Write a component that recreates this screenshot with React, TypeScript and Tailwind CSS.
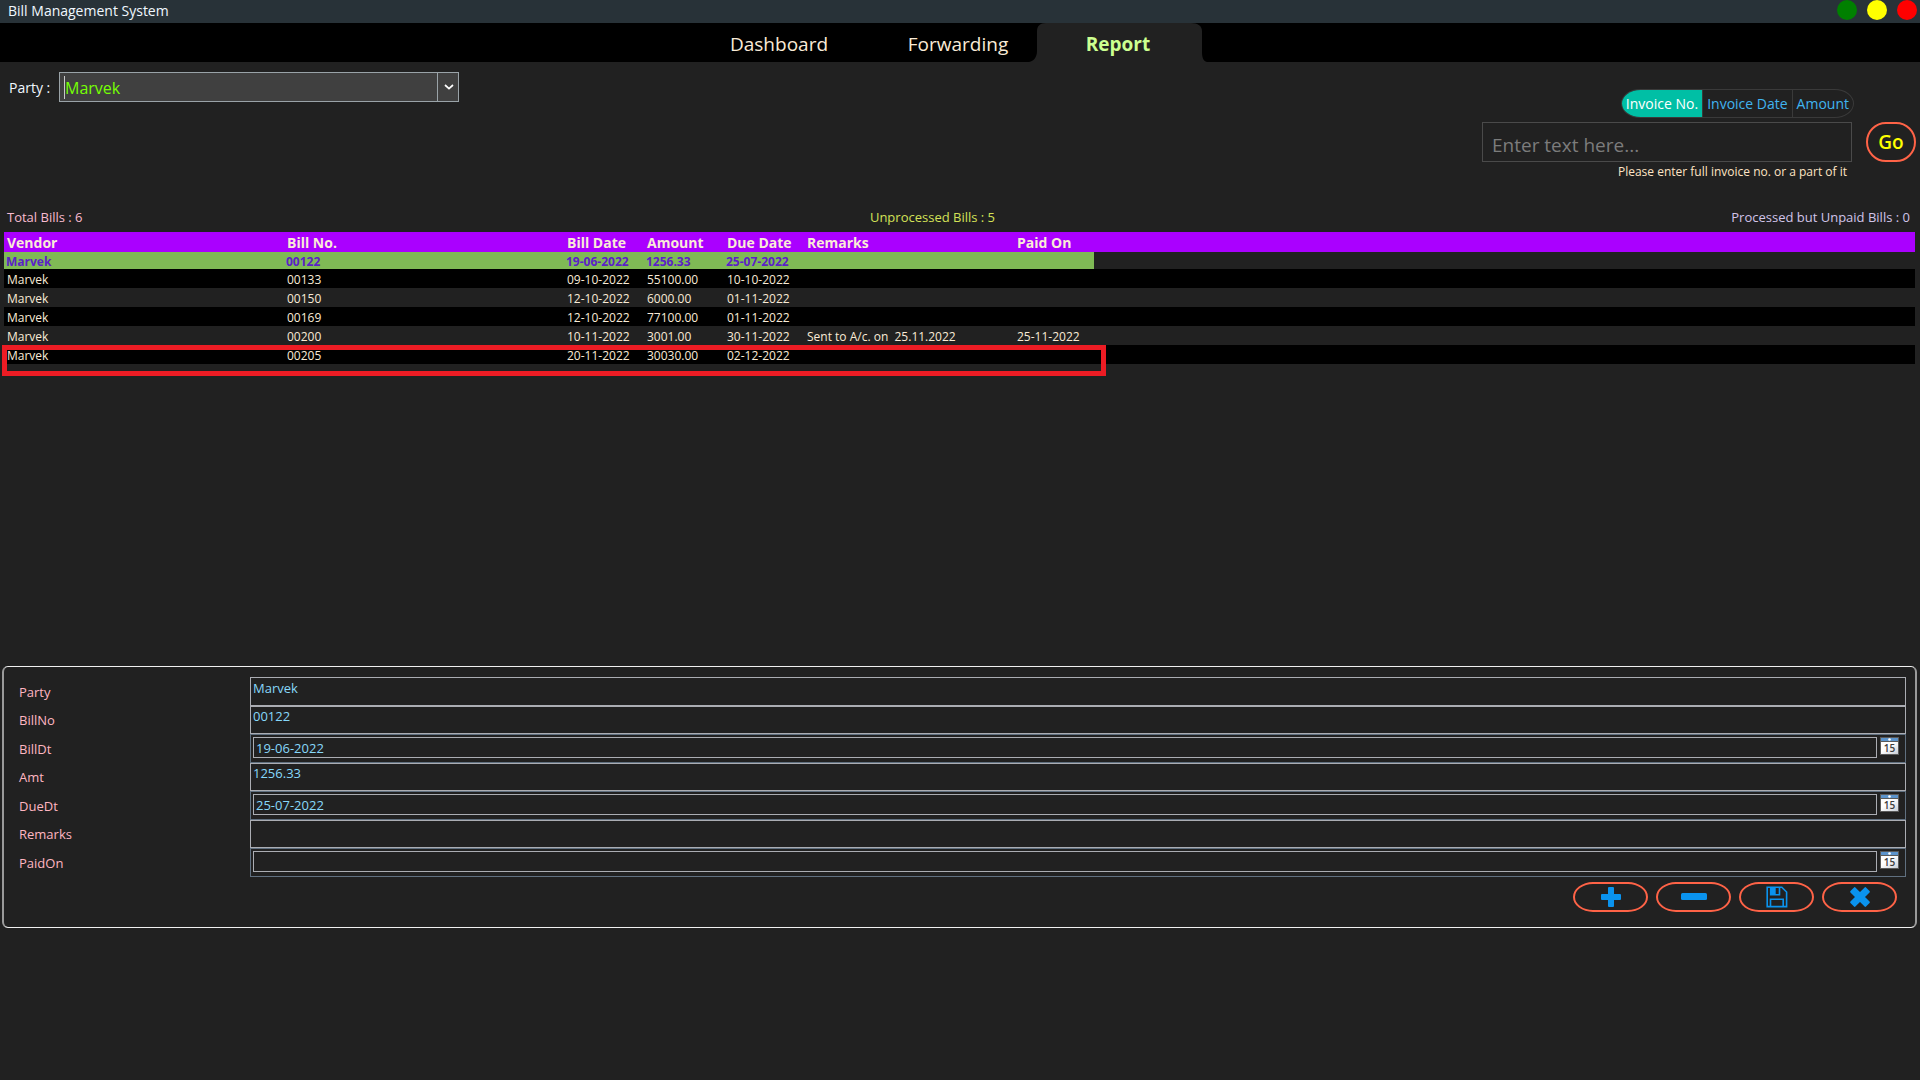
import React, { useState } from 'react';
import clsx from 'clsx';

interface Bill {
  vendor: string;
  billNo: string;
  billDate: string;
  amount: string;
  dueDate: string;
  remarks: string;
  paidOn: string;
}

const bills: Bill[] = [
  { vendor: 'Marvek', billNo: '00122', billDate: '19-06-2022', amount: '1256.33', dueDate: '25-07-2022', remarks: '', paidOn: '' },
  { vendor: 'Marvek', billNo: '00133', billDate: '09-10-2022', amount: '55100.00', dueDate: '10-10-2022', remarks: '', paidOn: '' },
  { vendor: 'Marvek', billNo: '00150', billDate: '12-10-2022', amount: '6000.00', dueDate: '01-11-2022', remarks: '', paidOn: '' },
  { vendor: 'Marvek', billNo: '00169', billDate: '12-10-2022', amount: '77100.00', dueDate: '01-11-2022', remarks: '', paidOn: '' },
  { vendor: 'Marvek', billNo: '00200', billDate: '10-11-2022', amount: '3001.00', dueDate: '30-11-2022', remarks: 'Sent to A/c. on  25.11.2022', paidOn: '25-11-2022' },
  { vendor: 'Marvek', billNo: '00205', billDate: '20-11-2022', amount: '30030.00', dueDate: '02-12-2022', remarks: '', paidOn: '' },
];

const columns: { key: keyof Bill; title: string; width: string }[] = [
  { key: 'vendor', title: 'Vendor', width: 'w-[280px]' },
  { key: 'billNo', title: 'Bill No.', width: 'w-[280px]' },
  { key: 'billDate', title: 'Bill Date', width: 'w-20' },
  { key: 'amount', title: 'Amount', width: 'w-20' },
  { key: 'dueDate', title: 'Due Date', width: 'w-20' },
  { key: 'remarks', title: 'Remarks', width: 'w-[210px]' },
  { key: 'paidOn', title: 'Paid On', width: 'w-20' },
];

const fields: { key: keyof Bill; label: string; date?: boolean }[] = [
  { key: 'vendor', label: 'Party' },
  { key: 'billNo', label: 'BillNo' },
  { key: 'billDate', label: 'BillDt', date: true },
  { key: 'amount', label: 'Amt' },
  { key: 'dueDate', label: 'DueDt', date: true },
  { key: 'remarks', label: 'Remarks' },
  { key: 'paidOn', label: 'PaidOn', date: true },
];

const searchModes = ['Invoice No.', 'Invoice Date', 'Amount'];

const CalendarIcon = () => (
  <svg viewBox="0 0 19 18" className="h-[18px] w-[19px]" aria-hidden="true">
    <defs>
      <linearGradient id="page" x1="0" y1="0" x2="1" y2="1">
        <stop offset="0.4" stopColor="#ffffff" />
        <stop offset="1" stopColor="#c9ced6" />
      </linearGradient>
    </defs>
    <rect width="19" height="18" fill="#5a5a5a" />
    <rect x="1" y="1" width="17" height="3" fill="#5c94cc" />
    <circle cx="9.5" cy="2.5" r="1.3" fill="#ffffff" />
    <rect x="1" y="5" width="17" height="12" fill="url(#page)" />
    <text x="9.5" y="15" textAnchor="middle" fontSize="10" fontFamily="Open Sans, sans-serif" fontWeight="600" fill="#3c3c3c">15</text>
  </svg>
);

const PlusIcon = () => (
  <svg viewBox="0 0 26 22" className="h-[22px] w-[26px]" fill="#0a93ee" aria-hidden="true">
    <rect x="10" y="1" width="6" height="20" rx="1" />
    <rect x="3" y="8" width="20" height="6" rx="1" />
  </svg>
);

const MinusIcon = () => (
  <svg viewBox="0 0 26 22" className="h-[22px] w-[26px]" fill="#0a93ee" aria-hidden="true">
    <rect x="0" y="7" width="26" height="7" rx="1.5" />
  </svg>
);

const SaveIcon = () => (
  <svg viewBox="0 0 26 22" className="h-[22px] w-[26px]" fill="none" stroke="#0a93ee" strokeWidth="1.6" aria-hidden="true">
    <path d="M3.2 1.2H17.8L22.6 6V20.6H3.2Z" />
    <path d="M6.7 1.2V8.8H15.5V1.2" />
    <rect x="6.7" y="1.2" width="5" height="7.6" fill="#0a93ee" stroke="none" />
    <path d="M6.5 20.6V13.2H19.2V20.6" />
  </svg>
);

const CrossIcon = () => (
  <svg viewBox="0 0 26 22" className="h-[22px] w-[26px]" fill="#0a93ee" aria-hidden="true">
    <g transform="rotate(45 13 11)">
      <rect x="9.5" y="0" width="7" height="22" rx="1" />
      <rect x="2" y="7.5" width="22" height="7" rx="1" />
    </g>
  </svg>
);

const actions = [
  { name: 'Add', Icon: PlusIcon },
  { name: 'Remove', Icon: MinusIcon },
  { name: 'Save', Icon: SaveIcon },
  { name: 'Cancel', Icon: CrossIcon },
];

const TitleBar = () => (
  <header className="flex h-[23px] items-start justify-between bg-[#283238] pr-[3px] pl-2">
    <h1 className="text-[14px] leading-[22px] text-[#f0f8ff]">Bill Management System</h1>
    <div className="flex gap-2.5">
      <button aria-label="Minimize" className="size-5 rounded-full bg-[#008000]" />
      <button aria-label="Restore" className="size-5 rounded-full bg-[#ffff00]" />
      <button aria-label="Close" className="size-5 rounded-full bg-[#ff0000]" />
    </div>
  </header>
);

const Tabs = () => (
  <nav className="flex h-[39px] justify-center bg-black pr-[42px] text-[19px] text-[#faebd7]">
    <a href="#dashboard" className="flex w-[178px] items-center justify-center pt-1">Dashboard</a>
    <a href="#forwarding" className="flex w-[180px] items-center justify-center pt-1">Forwarding</a>
    <a href="#report" aria-current="page" className="relative flex w-[140px] items-center justify-center pt-1 font-bold text-[#ccff90]">
      <svg viewBox="0 0 180 39" className="absolute top-0 -left-5 h-[39px] w-[180px]" fill="#212121" aria-hidden="true">
        <path d="M1 39C6 38 9 34 9 28V8C9 3 12 0 18 0H163C170 0 174 3 174 8V29C174 34 175 38 179 39Z" />
      </svg>
      <span className="relative">Report</span>
    </a>
  </nav>
);

const Search: React.FC = () => {
  const [mode, setMode] = useState<string>(searchModes[0]);

  return (
    <form className="flex items-start gap-3 pt-[27px] pr-1" onSubmit={(e) => e.preventDefault()}>
      <div className="flex w-[372px] flex-col items-end">
        <div role="radiogroup" aria-label="Search by" className="flex h-[29px] overflow-hidden rounded-[20px_/_15px] border border-[#3a3a3a] text-[14px]">
          {searchModes.map((name) => (
            <label
              key={name}
              className={clsx(
                'flex items-center border-l border-[#3a3a3a] px-1 first:border-l-0',
                mode === name ? 'bg-[#00bfa5] text-white' : 'text-[#40b4f0]'
              )}
            >
              <input type="radio" name="mode" className="sr-only" checked={mode === name} onChange={() => setMode(name)} />
              {name}
            </label>
          ))}
        </div>
        <input
          type="text"
          aria-label="Search text"
          placeholder="Enter text here..."
          className="mt-1 mr-0.5 h-10 w-[370px] border border-[#4a4a4a] px-[9px] pt-1.5 text-[19px] text-white outline-none placeholder:text-[#7c7c7c]"
        />
        <p className="mt-0.5 mr-[7px] text-[12px] leading-4 text-[#ffe4c4]">Please enter full invoice no. or a part of it</p>
      </div>
      <button className="mt-[33px] h-10 w-[50px] rounded-[20px] border-2 border-[#ff6347] text-[19px] leading-8 font-semibold text-[#ffff00]">Go</button>
    </form>
  );
};

const BillTable = () => (
  <div className="relative ml-1 mr-[5px]">
    <table className="w-full table-fixed border-collapse text-left text-[12px] leading-[14px] text-[#faebd7]">
      <thead>
        <tr className="h-5 bg-[#aa00ff] text-[14px]">
          {columns.map((c) => (
            <th key={c.key} className={clsx(c.width, 'p-0 pt-0.5 pl-[3px] font-bold')}>{c.title}</th>
          ))}
          <th className="p-0" />
        </tr>
      </thead>
      <tbody>
        {bills.map((bill, i) => (
          <tr key={bill.billNo} className={clsx(i === 0 ? 'h-[17px] font-bold text-[#5a20c8]' : 'h-[19px]', i % 2 === 1 && 'bg-black')}>
            {columns.map((c) => (
              <td key={c.key} className={clsx('p-0 pt-[3px] whitespace-pre', i === 0 ? 'bg-[#7fba55] pl-0.5' : 'pl-[3px]')}>{bill[c.key]}</td>
            ))}
            <td className="p-0" />
          </tr>
        ))}
      </tbody>
    </table>
    <div className="pointer-events-none absolute -bottom-3 -left-0.5 h-[31px] w-[1104px] border-[5px] border-[#ed1c24]" />
  </div>
);

const BillForm: React.FC<{ bill: Bill }> = ({ bill }) => (
  <form className="mr-[3px] ml-0.5 rounded-md border border-x-2 border-x-[#9a9a9a] border-y-[#f0f0f0] pt-2.5 pr-[9px] pb-[15px] pl-2 text-[13px]" onSubmit={(e) => e.preventDefault()}>
    <div className="grid h-[200px] grid-rows-7">
      {fields.map((f) => (
        <div key={f.key} className="flex">
          <label htmlFor={f.key} className="flex w-[238px] items-center pt-0.5 pl-[7px] text-[#ffb6c1]">{f.label}</label>
          {f.date ? (
            <div className="flex flex-1 items-start gap-[3px] border border-[#607080] pt-0.5 pr-1.5 pl-0.5">
              <input id={f.key} defaultValue={bill[f.key]} className="h-[21px] min-w-0 flex-1 border border-[#abadb3] px-0.5 text-[#87d8fa] outline-none" />
              <button type="button" aria-label={`Pick ${f.label}`}><CalendarIcon /></button>
            </div>
          ) : (
            <input id={f.key} defaultValue={bill[f.key]} className="min-w-0 flex-1 border border-[#abadb3] px-0.5 pb-1.5 text-[#87d8fa] outline-none" />
          )}
        </div>
      ))}
    </div>
    <div className="mt-[5px] flex justify-end gap-2 pr-[9px]">
      {actions.map(({ name, Icon }) => (
        <button key={name} aria-label={name} className="flex h-[30px] w-[75px] items-center justify-center rounded-[20px_/_15px] border-2 border-[#ff6347]">
          <Icon />
        </button>
      ))}
    </div>
  </form>
);

export default function App() {
  return (
    <div className="min-h-screen bg-[#212121] font-['Open_Sans',sans-serif]">
      <TitleBar />
      <Tabs />
      <main>
        <div className="flex items-start justify-between">
          <div className="flex items-center pt-2.5 pl-[9px]">
            <label htmlFor="party" className="w-[50px] text-[14px] text-[#f0f8ff]">Party :</label>
            <div className="relative w-[400px]">
              <select id="party" className="h-[30px] w-full appearance-none border border-[#9aa3a8] bg-[#404040] pt-0.5 pl-[5px] text-[16px] text-[#76ff03] outline-none">
                <option>Marvek</option>
              </select>
              <span className="pointer-events-none absolute top-1 left-[5px] h-[23px] w-px bg-[#c8c8c8]" />
              <span className="pointer-events-none absolute inset-y-0 right-0 flex w-[22px] items-center justify-center border-l border-[#9aa3a8]">
                <svg viewBox="0 0 10 6" className="h-1.5 w-2.5" fill="none" stroke="#ffffff" strokeWidth="1.7" aria-hidden="true">
                  <path d="M1 1L5 4.6L9 1" />
                </svg>
              </span>
            </div>
          </div>
          <Search />
        </div>
        <div className="mt-[27px] grid grid-cols-3 pr-2.5 pb-[5px] pl-[7px] text-[13px] leading-5">
          <span className="text-[#f8bbd0]">Total Bills : 6</span>
          <span className="pr-[52px] text-center text-[#d4e157]">Unprocessed Bills : 5</span>
          <span className="text-right text-[#d1c4e9]">Processed but Unpaid Bills : 0</span>
        </div>
        <div className="min-h-[434px]">
          <BillTable />
        </div>
        <BillForm bill={bills[0]} />
      </main>
    </div>
  );
}
